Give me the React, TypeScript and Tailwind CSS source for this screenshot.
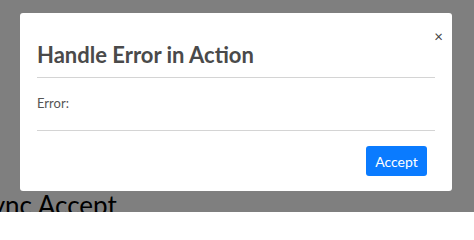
import React from "react";

export default function App() {
  return (
    <div className="relative w-[474px] h-[212px] overflow-hidden bg-white" style={{ fontFamily: 'Lato, "Liberation Sans", sans-serif' }}>
      <div className="absolute left-[-37px] top-[192px] text-[26px] leading-none text-black whitespace-nowrap">
        Async Accept
      </div>
      <div className="absolute inset-0 bg-[#000]/50" />
      <div className="absolute left-[20px] top-[13px] w-[432px] h-[178px] bg-white rounded-[3px] flex flex-col px-[17px]">
        <div className="relative">
          <button className="absolute right-[-8px] top-[16px] text-[#444] text-[15px] leading-none">×</button>
          <h2 className="pt-[29px] pb-[9px] text-[22px] leading-[26px] font-bold text-[#4a4a4a] border-b border-[#d4d4d4]">
            Handle Error in Action
          </h2>
        </div>
        <div className="h-[53px] flex items-center text-[13px] text-[#555] border-b border-[#d4d4d4]">
          Error:
        </div>
        <div className="flex justify-end pt-[15px] pr-[8px]">
          <button className="h-[30px] w-[61px] bg-[#0a7bff] text-white text-[14px] rounded-[3px] flex items-center justify-center">
            Accept
          </button>
        </div>
      </div>
    </div>
  );
}
